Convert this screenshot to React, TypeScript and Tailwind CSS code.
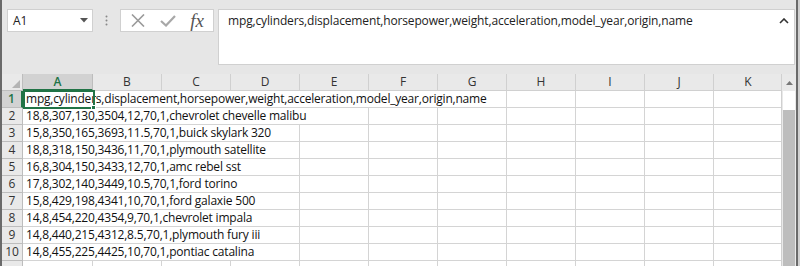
import React from "react";

const rows: string[] = [
  "mpg,cylinders,displacement,horsepower,weight,acceleration,model_year,origin,name",
  "18,8,307,130,3504,12,70,1,chevrolet chevelle malibu",
  "15,8,350,165,3693,11.5,70,1,buick skylark 320",
  "18,8,318,150,3436,11,70,1,plymouth satellite",
  "16,8,304,150,3433,12,70,1,amc rebel sst",
  "17,8,302,140,3449,10.5,70,1,ford torino",
  "15,8,429,198,4341,10,70,1,ford galaxie 500",
  "14,8,454,220,4354,9,70,1,chevrolet impala",
  "14,8,440,215,4312,8.5,70,1,plymouth fury iii",
  "14,8,455,225,4425,10,70,1,pontiac catalina",
  "",
];

const cols = ["B", "C", "D", "E", "F", "G", "H", "I", "J", "K"];
const font = { fontFamily: '"Open Sans", "Noto Sans", sans-serif' };

export default function App() {
  return (
    <div className="w-[800px] h-[266px] overflow-hidden flex bg-[#e6e6e6]" style={font}>
      <div className="w-[2px] h-full bg-[#6a6a6a]" />
      <div className="w-[794px] h-full flex flex-col">
        {/* top bar */}
        <div className="h-[74px] shrink-0 flex items-start pt-[9px]">
          <div className="ml-[5px] w-[86px] h-[23px] bg-white border border-[#d0d0d0] flex items-center pl-[5px] pr-[4px] text-[12px] text-[#222]">
            <span className="flex-1">A1</span>
            <svg width="8" height="5" viewBox="0 0 8 5"><path d="M0 0 L8 0 L4 4.5 Z" fill="#555" /></svg>
          </div>
          <div className="w-[27px] h-[23px] flex items-center justify-center">
            <svg width="3" height="11" viewBox="0 0 3 11">
              <circle cx="1.5" cy="1.5" r="1" fill="#888" />
              <circle cx="1.5" cy="5.5" r="1" fill="#888" />
              <circle cx="1.5" cy="9.5" r="1" fill="#888" />
            </svg>
          </div>
          <div className="w-[94px] h-[23px] bg-white border border-[#d0d0d0] flex items-center">
            <div className="w-[32px] flex justify-center pl-[2px]">
              <svg width="14" height="13" viewBox="0 0 14 13"><path d="M1 0.5 L13 12.5 M13 0.5 L1 12.5" stroke="#9a9a9a" strokeWidth="1.6" /></svg>
            </div>
            <div className="w-[30px] flex justify-center">
              <svg width="16" height="12" viewBox="0 0 16 12"><path d="M1 6 L6 10.5 L15 1" stroke="#a8a8a8" strokeWidth="2.2" fill="none" /></svg>
            </div>
            <div className="flex-1 flex justify-center pr-[2px] text-[19px] leading-none italic text-[#555]" style={{ fontFamily: '"Liberation Serif", serif' }}>
              fx
            </div>
          </div>
          <div className="ml-[4px] w-[577px] h-[56px] bg-white border border-[#d0d0d0] flex items-start pl-[9px] pr-[5px] pt-[2px] text-[12px] leading-[18px] text-[#222]">
            <span className="flex-1 tracking-[-0.15px]">{rows[0]}</span>
            <svg className="mt-[6px]" width="10" height="6" viewBox="0 0 10 6"><path d="M1 5 L5 1 L9 5" stroke="#333" strokeWidth="1.6" fill="none" /></svg>
          </div>
        </div>
        {/* grid */}
        <div className="flex flex-1 min-h-0 bg-white">
          <div className="w-[779px] overflow-hidden relative">
            {/* header row */}
            <div className="flex h-[17px] bg-[#e9e9e9] text-[12px] text-[#333]">
              <div className="w-[21px] shrink-0 border-r border-b border-[#bdbdbd] relative">
                <svg className="absolute right-[2px] bottom-[2px]" width="8" height="8" viewBox="0 0 8 8"><path d="M8 0 L8 8 L0 8 Z" fill="#b4b4b4" /></svg>
              </div>
              <div className="w-[70px] shrink-0 bg-[#d2d2d2] border-r border-[#bdbdbd] border-b-2 border-b-[#217346] text-[#217346] font-semibold flex items-center justify-center">A</div>
              {cols.map((c) => (
                <div key={c} className="w-[69px] shrink-0 border-r border-b border-[#d0d0d0] flex items-center justify-center">{c}</div>
              ))}
            </div>
            {rows.map((r, i) => (
              <div key={i} className="flex h-[17px] shrink-0 text-[12px] text-[#111]">
                <div
                  className={
                    i === 0
                      ? "w-[21px] shrink-0 bg-[#d2d2d2] border-r-2 border-r-[#217346] border-b border-b-[#bdbdbd] text-[#217346] font-semibold text-[12px] flex items-center justify-center"
                      : "w-[21px] shrink-0 bg-[#e9e9e9] border-r border-b border-[#bdbdbd] text-[#333] text-[12px] flex items-center justify-center"
                  }
                >
                  {i < 10 ? i + 1 : ""}
                </div>
                <div className="w-[70px] shrink-0 border-r border-b border-[#d4d4d4] relative">
                  {r && (
                    <span className="absolute left-[2px] top-0 h-[16px] leading-[16px] pl-[1px] pr-[1px] bg-white whitespace-nowrap z-10 tracking-[-0.2px]">{r}</span>
                  )}
                </div>
                {cols.map((c) => (
                  <div key={c} className="w-[69px] shrink-0 border-r border-b border-[#d4d4d4] bg-white" />
                ))}
              </div>
            ))}
            {/* selection */}
            <div className="absolute left-[21px] top-[16px] w-[72px] h-[19px] border-2 border-[#217346] z-20" />
            <div className="absolute left-[89px] top-[31px] w-[5px] h-[5px] bg-[#217346] border border-white z-30" />
          </div>
          {/* scrollbar */}
          <div className="w-[15px] flex flex-col bg-[#e9e9e9] border-l border-[#d0d0d0]">
            <div className="h-[17px] shrink-0 flex items-center justify-center">
              <svg width="7" height="4" viewBox="0 0 7 4"><path d="M0 4 L3.5 0 L7 4 Z" fill="#777" /></svg>
            </div>
            <div className="h-[19px] shrink-0 bg-white mx-[1px]" />
            <div className="flex-1 bg-[#bdbdbd] mx-[1px]" />
          </div>
        </div>
      </div>
      <div className="w-[2px] h-full bg-[#6a6a6a]" />
      <div className="w-[2px] h-full bg-[#d0d0d0]" />
    </div>
  );
}
